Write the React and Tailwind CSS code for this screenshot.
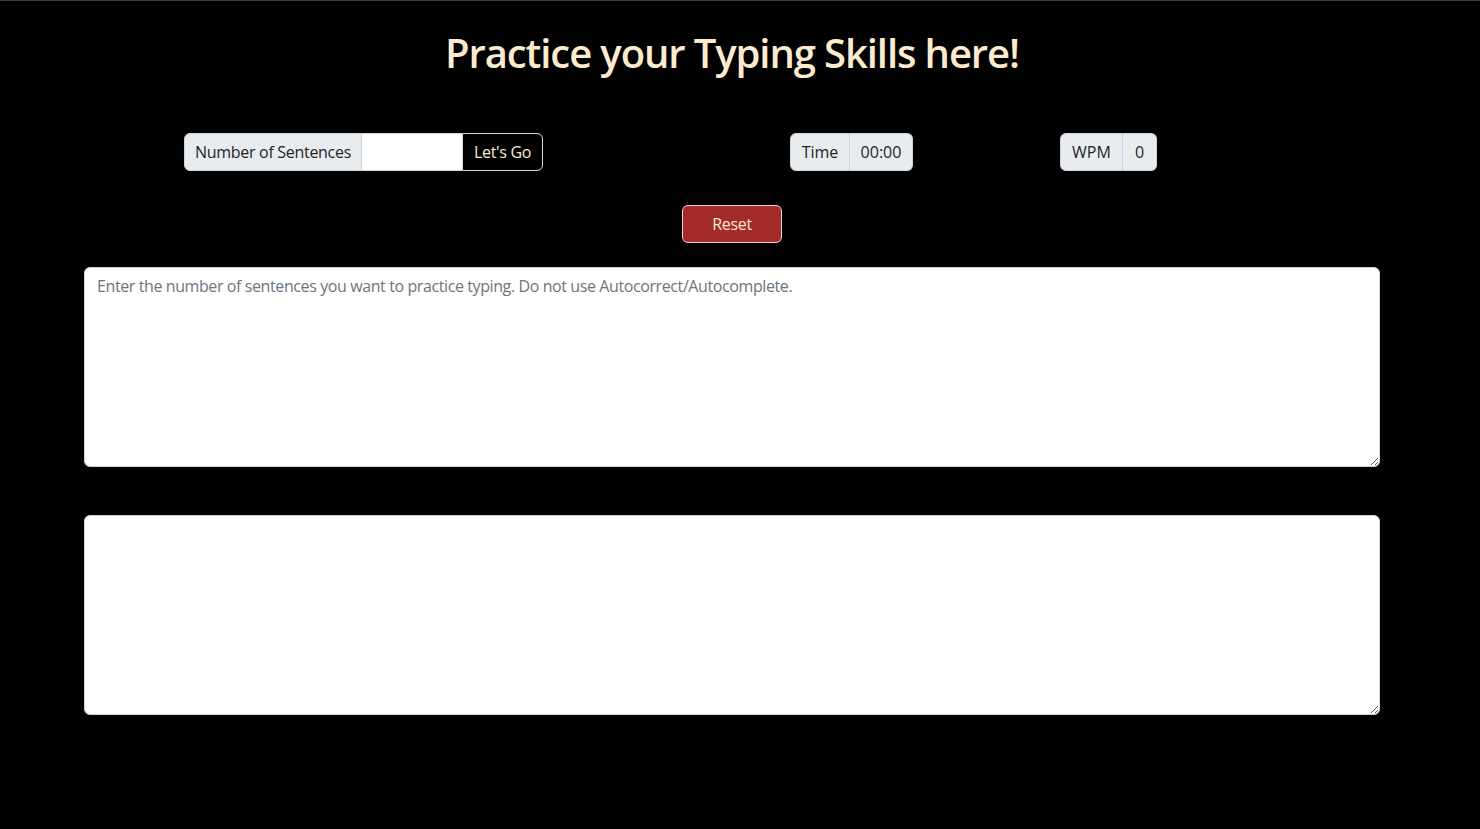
import React from "react";

const font = { fontFamily: '"Segoe UI", "Open Sans", "Noto Sans", "Liberation Sans", sans-serif' };

export default function App() {
  return (
    <div className="min-h-[829px] w-full bg-black border-t border-[#3c3c3c]" style={font}>
      <div className="w-[1464px]">
        <h1 className="pt-[24px] text-center text-[40px] leading-[56px] font-semibold text-[#fdebd0] tracking-[-1.1px]">
          Practice your Typing Skills here!
        </h1>

        <div className="mt-[52px] flex items-center h-[38px] pl-[184px]">
          <div className="flex h-[38px] text-[16px] rounded-[6px]">
            <span className="w-[178px] flex items-center justify-center bg-[#e9ecef] text-[#212529] border border-[#ced4da] rounded-l-[6px] tracking-[-0.3px]">
              Number of Sentences
            </span>
            <input className="w-[100px] bg-white border-y border-[#ced4da] outline-none px-3" />
            <button className="w-[81px] flex items-center justify-center bg-black text-[#fdebd0] border border-[#d9d9d9] rounded-r-[6px] tracking-[-0.3px]">
              Let's Go
            </button>
          </div>

          <div className="ml-[247px] flex h-[38px] text-[16px] text-[#212529]">
            <span className="w-[60px] flex items-center justify-center bg-[#e9ecef] border border-[#ced4da] rounded-l-[6px]">
              Time
            </span>
            <span className="w-[63px] flex items-center justify-center bg-[#e9ecef] border border-l-0 border-[#ced4da] rounded-r-[6px]">
              00:00
            </span>
          </div>

          <div className="ml-[147px] flex h-[38px] text-[16px] text-[#212529]">
            <span className="w-[63px] flex items-center justify-center bg-[#e9ecef] border border-[#ced4da] rounded-l-[6px]">
              WPM
            </span>
            <span className="w-[34px] flex items-center justify-center bg-[#e9ecef] border border-l-0 border-[#ced4da] rounded-r-[6px]">
              0
            </span>
          </div>
        </div>

        <div className="mt-[34px] flex justify-center">
          <button className="w-[100px] h-[38px] bg-[#a52a2a] text-[#fdebd0] text-[16px] border border-[#e6d6c6] rounded-[6px] tracking-[-0.3px]">
            Reset
          </button>
        </div>

        <div className="mt-[24px] px-[84px] flex flex-col gap-[48px]">
          <textarea
            className="block w-[1296px] h-[200px] bg-white rounded-[6px] border border-[#ced4da] px-[12px] py-[6px] text-[16px] leading-[24px] text-[#212529] placeholder:text-[#6c757d] outline-none tracking-[-0.4px]"
            placeholder="Enter the number of sentences you want to practice typing. Do not use Autocorrect/Autocomplete."
          />
          <textarea className="block w-[1296px] h-[200px] bg-white rounded-[6px] border border-[#ced4da] px-[12px] py-[6px] text-[16px] leading-[24px] text-[#212529] outline-none" />
        </div>
      </div>
    </div>
  );
}
